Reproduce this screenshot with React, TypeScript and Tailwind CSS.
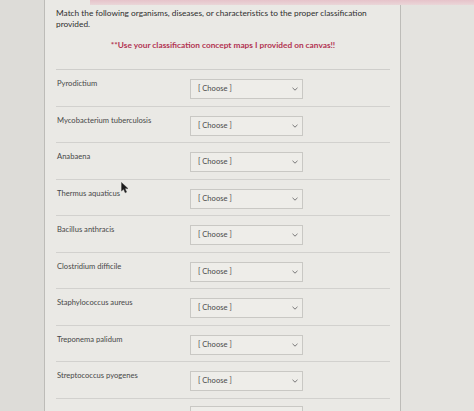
import React from "react";

const items = [
  "Pyrodictium",
  "Mycobacterium tuberculosis",
  "Anabaena",
  "Thermus aquaticus",
  "Bacillus anthracis",
  "Clostridium difficile",
  "Staphylococcus aureus",
  "Treponema palidum",
  "Streptococcus pyogenes",
];

function Select({ empty }: { empty?: boolean }) {
  return (
    <div className="flex h-[20px] w-[113px] items-center justify-between border border-[#c9c8c4] bg-[#eeede9] pl-[7px] pr-[4px] text-[7.6px] text-[#4a4a4a]">
      {!empty && <span>[ Choose ]</span>}
      {!empty && (
        <svg width="6" height="4" viewBox="0 0 6 4">
          <path d="M0.5 0.8 L3 3.2 L5.5 0.8" fill="none" stroke="#777" strokeWidth="1" />
        </svg>
      )}
    </div>
  );
}

export default function App() {
  return (
    <div
      className="relative flex h-[411px] w-[474px] overflow-hidden bg-[#e3e2de]"
      style={{ fontFamily: "Lato, 'Open Sans', sans-serif" }}
    >
      <div className="w-[44px] shrink-0 bg-[#dddcd8]" />
      <div className="flex w-[357px] shrink-0 flex-col border-x border-[#bdbcb8] bg-[#eae9e5] pl-[11px] pr-[10px]">
        <p className="mt-[8px] text-[8.3px] leading-[10.5px] text-[#2f2f2f]">
          Match the following organisms, diseases, or characteristics to the proper classification provided.
        </p>
        <p className="mt-[11px] text-center text-[8.3px] font-bold leading-[10px] text-[#b23452]">
          **Use your classification concept maps I provided on canvas!!
        </p>
        <div className="mt-[19px] flex flex-col border-t border-[#cfcecb]">
          {items.map((name) => (
            <div key={name} className="flex h-[36.5px] items-start border-b border-[#d2d1ce]">
              <span className="mt-[7px] w-[134px] shrink-0 pl-[1px] text-[7.6px] leading-[12px] text-[#484848]">
                {name}
              </span>
              <div className="mt-[9px]">
                <Select />
              </div>
            </div>
          ))}
          <div className="flex h-[20px] items-start">
            <span className="w-[134px] shrink-0" />
            <div className="mt-[7px]">
              <Select empty />
            </div>
          </div>
        </div>
      </div>
      <div className="flex-1 bg-[#e4e3df]" />
      <div className="pointer-events-none absolute left-[90px] right-0 top-0 h-[5px] bg-gradient-to-b from-[#e6c3ca] to-[#ead6d8]" />
      <svg className="pointer-events-none absolute left-[121px] top-[182px]" width="8" height="12" viewBox="0 0 8 12">
        <path d="M0.5 0.5 L0.5 9 L2.6 7.2 L4.2 10.8 L5.6 10.1 L4 6.6 L7 6.6 Z" fill="#1a1a1a" stroke="#444" strokeWidth="0.5" />
      </svg>
    </div>
  );
}
